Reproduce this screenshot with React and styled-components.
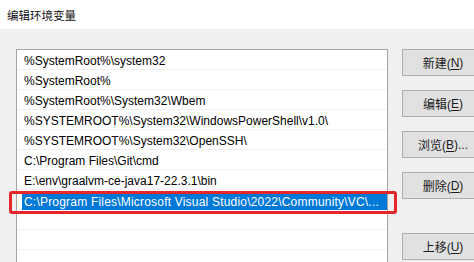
import React from 'react';
import styled, { createGlobalStyle } from 'styled-components';

const paths = [
  '%SystemRoot%\\system32',
  '%SystemRoot%',
  '%SystemRoot%\\System32\\Wbem',
  '%SYSTEMROOT%\\System32\\WindowsPowerShell\\v1.0\\',
  '%SYSTEMROOT%\\System32\\OpenSSH\\',
  'C:\\Program Files\\Git\\cmd',
  'E:\\env\\graalvm-ce-java17-22.3.1\\bin',
  'C:\\Program Files\\Microsoft Visual Studio\\2022\\Community\\VC\\...',
  '',
  '',
  '',
];

const SELECTED = 7;

const buttons = [
  { label: '新建', key: 'N' },
  { label: '编辑', key: 'E' },
  { label: '浏览', key: 'B', tail: '...' },
  { label: '删除', key: 'D' },
  { label: '上移', key: 'U', spaced: true },
];

const App = () => {
  return (
    <>
      <GlobalStyle />
      <Dialog>
        <TitleBar>编辑环境变量</TitleBar>
        <Body>
          <PathList>
            {paths.map((path, index) => (
              <PathRow key={index}>
                {index === SELECTED ? (
                  <>
                    <Selection>{path}</Selection>
                    <Highlight />
                  </>
                ) : (
                  path
                )}
              </PathRow>
            ))}
          </PathList>
          <ButtonColumn>
            {buttons.map((b) => (
              <Button key={b.key} $spaced={b.spaced}>
                {b.label}(<u>{b.key}</u>){b.tail}
              </Button>
            ))}
          </ButtonColumn>
        </Body>
      </Dialog>
    </>
  );
};

export default App;

const GlobalStyle = createGlobalStyle`
  html, body {
    margin: 0;
    padding: 0;
    background: #f0f0f0;
    overflow: hidden;
  }
`;

const Dialog = styled.div`
  display: flex;
  flex-direction: column;
  width: 474px;
  height: 262px;
  overflow: hidden;
  font-family: 'Liberation Sans', 'Noto Sans CJK SC', sans-serif;
  color: #000;
`;

const TitleBar = styled.div`
  height: 29px;
  flex-shrink: 0;
  display: flex;
  align-items: center;
  padding-left: 7px;
  background: #fff;
  font-family: 'Noto Sans CJK SC', sans-serif;
  font-size: 11.5px;
  color: #111;
`;

const Body = styled.div`
  display: flex;
  align-items: flex-start;
  padding: 20px 0 0 16px;
  background: #f0f0f0;
  flex: 1;
`;

const PathList = styled.div`
  width: 370px;
  flex-shrink: 0;
  background: #fff;
  border: 1px solid #a5a5a5;
  border-bottom: none;
  display: flex;
  flex-direction: column;
`;

const PathRow = styled.div`
  position: relative;
  box-sizing: border-box;
  height: 20px;
  padding: 3px 0 0 7px;
  border-bottom: 1px solid #f0f0f0;
  display: flex;
  align-items: center;
  font-size: 12px;
  white-space: nowrap;
`;

const Selection = styled.span`
  display: flex;
  align-items: center;
  box-sizing: border-box;
  margin-left: -2px;
  padding-left: 2px;
  margin-top: 1px;
  width: 366px;
  height: 16px;
  background: #0078d7;
  color: #fff;
  letter-spacing: 0.2px;
`;

const Highlight = styled.div`
  position: absolute;
  left: -8px;
  top: 1px;
  width: 388px;
  height: 23px;
  box-sizing: border-box;
  border: 3px solid #e5262b;
  border-radius: 3px;
`;

const ButtonColumn = styled.div`
  display: flex;
  flex-direction: column;
  gap: 14px;
  margin-left: 14px;
  flex-shrink: 0;
`;

const Button = styled.div`
  box-sizing: border-box;
  width: 82px;
  height: 27px;
  margin-top: ${(p) => (p.$spaced ? '20px' : '0')};
  background: #e1e1e1;
  border: 1px solid #adadad;
  display: flex;
  align-items: center;
  justify-content: center;
  font-size: 12px;
  color: #1a1a1a;
  white-space: nowrap;

  u {
    text-underline-offset: 2px;
  }
`;
